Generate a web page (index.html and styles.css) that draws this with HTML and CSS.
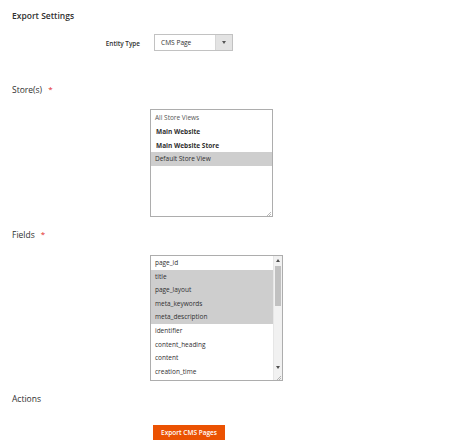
FILE: index.html
```html
<!DOCTYPE html>
<html lang="en">
<head>
<meta charset="utf-8">
<title>Export</title>
<link rel="stylesheet" href="styles.css">
</head>
<body>
<div class="page">
  <h2 class="legend">Export Settings</h2>
  <div class="field-row">
    <label class="field-label">Entity Type</label>
    <div class="select">
      <span class="select-value">CMS Page</span>
      <span class="select-arrow"><svg width="4" height="3" viewBox="0 0 4 3"><path d="M0 0H4L2 3Z" fill="#555"/></svg></span>
    </div>
  </div>

  <h3 class="section-title">Store(s)<span class="req">*</span></h3>
  <div class="listbox stores">
    <div class="options">
      <div class="opt muted">All Store Views</div>
      <div class="opt group">Main Website</div>
      <div class="opt group">Main Website Store</div>
      <div class="opt selected">Default Store View</div>
    </div>
    <span class="grip"><svg width="5" height="5" viewBox="0 0 5 5"><path d="M5 1L1 5M5 3L3 5" stroke="#9a9a9a" stroke-width="0.7"/></svg></span>
  </div>

  <h3 class="section-title">Fields<span class="req">*</span></h3>
  <div class="listbox fields">
    <div class="options">
      <div class="opt">page_id</div>
      <div class="opt selected">title</div>
      <div class="opt selected">page_layout</div>
      <div class="opt selected">meta_keywords</div>
      <div class="opt selected">meta_description</div>
      <div class="opt">identifier</div>
      <div class="opt">content_heading</div>
      <div class="opt">content</div>
      <div class="opt">creation_time</div>
    </div>
    <div class="scrollbar">
      <span class="arrow"><svg width="4" height="3" viewBox="0 0 4 3"><path d="M0 3H4L2 0Z" fill="#505050"/></svg></span>
      <div class="track"><div class="thumb"></div></div>
      <span class="arrow"><svg width="4" height="3" viewBox="0 0 4 3"><path d="M0 0H4L2 3Z" fill="#505050"/></svg></span>
      <span class="corner"></span>
    </div>
    <span class="grip"><svg width="5" height="5" viewBox="0 0 5 5"><path d="M5 1L1 5M5 3L3 5" stroke="#9a9a9a" stroke-width="0.7"/></svg></span>
  </div>

  <h3 class="section-title actions">Actions</h3>
  <div class="button-row">
    <button class="primary" type="button">Export CMS Pages</button>
  </div>
</div>
</body>
</html>
```

FILE: styles.css
```css
html, body {
  margin: 0;
  padding: 0;
  background: #ffffff;
}

body {
  font-family: "Open Sans", "Noto Sans", sans-serif;
  color: #303030;
}

.page {
  padding: 10px 0 0 12px;
}

.legend {
  margin: 0;
  font-size: 8.5px;
  line-height: 12px;
  font-weight: 600;
  color: #303030;
}

.field-row {
  display: flex;
  align-items: center;
  margin-top: 12px;
}

.field-label {
  width: 128px;
  text-align: right;
  font-size: 6.4px;
  font-weight: 600;
  color: #303030;
  padding-top: 2px;
}

.select {
  margin-left: 14px;
  width: 79px;
  height: 17px;
  box-sizing: border-box;
  border: 1px solid #c2c2c2;
  display: flex;
  align-items: stretch;
  background: #fff;
}

.select-value {
  flex: 1;
  display: flex;
  align-items: center;
  padding-left: 6px;
  font-size: 6.6px;
  color: #303030;
}

.select-arrow {
  width: 16px;
  border-left: 1px solid #d6d6d6;
  background: #e3e3e3;
  display: flex;
  align-items: center;
  justify-content: center;
}

.section-title {
  margin: 33px 0 0 0;
  font-size: 8.5px;
  line-height: 12px;
  font-weight: 400;
  color: #303030;
}

.section-title + .listbox {
  margin-top: 13px;
}

.req {
  color: #e22626;
  font-size: 8px;
  margin-left: 6px;
  position: relative;
  top: -1px;
}

.listbox {
  position: relative;
  margin-left: 138px;
  box-sizing: border-box;
  border: 1px solid #adadad;
  background: #fff;
  display: flex;
  overflow: hidden;
}

.listbox.stores {
  width: 123px;
  height: 108px;
  padding-top: 1px;
}

.listbox.fields {
  width: 133px;
  height: 126px;
  margin-top: 14px;
}

.stores + .section-title {
  margin-top: 12px;
}

.options {
  flex: 1;
  display: flex;
  flex-direction: column;
}

.opt {
  height: 13.8px;
  line-height: 13.8px;
  padding-left: 4px;
  font-size: 6.5px;
  color: #303030;
  white-space: nowrap;
}

.fields .opt {
  height: 13.6px;
  line-height: 13.6px;
}

.opt.muted {
  color: #555;
}

.opt.group {
  font-weight: 700;
  padding-left: 5px;
}

.opt.selected {
  background: #cecece;
}

.scrollbar {
  width: 8px;
  display: flex;
  flex-direction: column;
  background: #f1f1f1;
  border-left: 1px solid #e6e6e6;
}

.arrow {
  height: 9px;
  display: flex;
  align-items: center;
  justify-content: center;
}

.track {
  flex: 1;
  padding: 1px 1px 0 1px;
}

.thumb {
  height: 40px;
  background: #c1c1c1;
}

.corner {
  height: 8px;
}

.grip {
  position: absolute;
  right: 1px;
  bottom: 1px;
  width: 5px;
  height: 5px;
  display: block;
  line-height: 0;
}

.fields + .section-title {
  margin-top: 12px;
}

.button-row {
  margin-top: 13px;
  padding-left: 141px;
}

.primary {
  width: 72px;
  height: 15px;
  padding: 0;
  border: 0;
  background: #eb5202;
  color: #ffffff;
  font-family: "Open Sans", "Noto Sans", sans-serif;
  font-size: 6.5px;
  font-weight: 600;
  cursor: pointer;
}
```
